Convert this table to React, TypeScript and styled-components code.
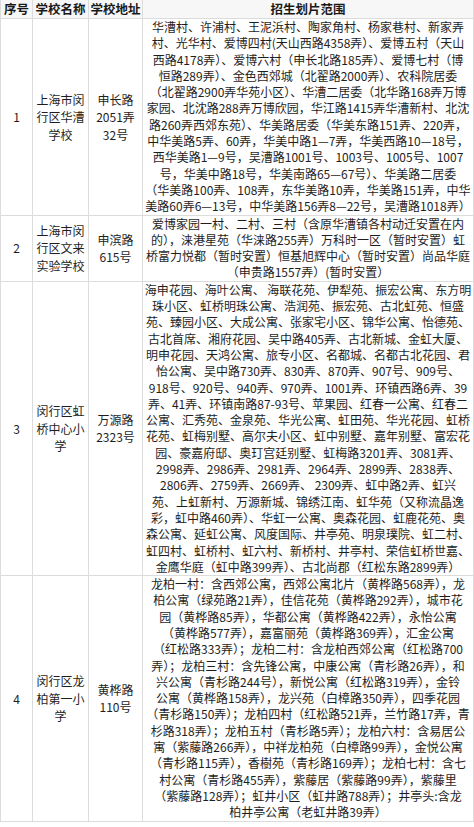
import React from 'react'
import styled, { createGlobalStyle } from 'styled-components'

const GlobalStyle = createGlobalStyle`
  html, body {
    margin: 0;
    padding: 0;
    background: #ffffff;
  }
  body {
    font-family: "Noto Sans CJK SC", "Noto Sans", sans-serif;
    color: #222;
  }
`

const Table = styled.table`
  width: 474px;
  border-collapse: collapse;
  table-layout: fixed;
`

const HeadCell = styled.th`
  height: 18px;
  padding: 0;
  font-size: 12.5px;
  font-weight: 700;
  line-height: 18px;
  color: #1a1a1a;
  background: #f7f7f7;
  border: 1px solid #dcdcdc;
  border-top: none;
  text-align: center;
  white-space: nowrap;
`

const Cell = styled.td<{ $side?: boolean }>`
  padding: 0;
  border: 1px solid #dcdcdc;
  text-align: center;
  vertical-align: middle;
  font-size: 12px;
  line-height: ${p => (p.$side ? '17.5px' : '16.3px')};
  color: #1e1e1e;
`

const Line = styled.div`
  white-space: nowrap;
`

type Row = {
  no: string
  name: string[]
  addr: string[]
  area: string[]
}

const rows: Row[] = [
  {
    no: '1',
    name: ['上海市闵', '行区华漕', '学校'],
    addr: ['申长路', '2051弄', '32号'],
    area: [
      '华漕村、许浦村、王泥浜村、陶家角村、杨家巷村、新家弄',
      '村、光华村、爱博四村(天山西路4358弄）、爱博五村（天山',
      '西路4178弄）、爱博六村（申长北路185弄）、爱博七村（博',
      '恒路289弄）、金色西郊城（北翟路2000弄）、农科院居委',
      '（北翟路2900弄华苑小区）、华漕二居委（北华路168弄万博',
      '家园、北沈路288弄万博欣园，华江路1415弄华漕新村、北沈',
      '路260弄西郊东苑）、华美路居委（华美东路151弄、220弄，',
      '中华美路5弄、60弄，华美中路1—7弄，华美西路10—18号，',
      '西华美路1—9号，吴漕路1001号、1003号、1005号、1007',
      '号，华美中路18号，华美南路65—67号）、华美路二居委',
      '（华美路100弄、108弄，东华美路10弄，华美路151弄，中华',
      '美路60弄6—13号，中华美路156弄8—22号，吴漕路1018弄）',
    ],
  },
  {
    no: '2',
    name: ['上海市闵', '行区文来', '实验学校'],
    addr: ['申滨路', '615号'],
    area: [
      '爱博家园一村、二村、三村（含原华漕镇各村动迁安置在内',
      '的），涞港星苑（华涞路255弄）万科时一区（暂时安置）虹',
      '桥富力悦都（暂时安置）恒基旭辉中心（暂时安置）尚品华庭',
      '（申贵路1557弄）(暂时安置）',
    ],
  },
  {
    no: '3',
    name: ['闵行区虹', '桥中心小', '学'],
    addr: ['万源路', '2323号'],
    area: [
      '海申花园、海叶公寓、 海联花苑、伊犁苑、振宏公寓、东方明',
      '珠小区、虹桥明珠公寓、浩润苑、振宏苑、古北虹苑、恒盛',
      '苑、臻园小区、大成公寓、张家宅小区、锦华公寓、怡德苑、',
      '古北首席、湘府花园、吴中路405弄、古北新城、金虹大厦、',
      '明申花园、天鸿公寓、旅专小区、名都城、名都古北花园、君',
      '怡公寓、吴中路730弄、830弄、870弄、907号、909号、',
      '918号、920号、940弄、970弄、1001弄、环镇西路6弄、39',
      '弄、41弄、环镇南路87-93号、苹果园、红春一公寓、红春二',
      '公寓、汇秀苑、金泉苑、华光公寓、虹田苑、华光花园、虹桥',
      '花苑、虹梅别墅、高尔夫小区、虹中别墅、嘉年别墅、富宏花',
      '园、豪嘉府邸、奥玎宫廷别墅、虹梅路3201弄、3081弄、',
      '2998弄、2986弄、2981弄、2964弄、2899弄、2838弄、',
      '2806弄、2759弄、2669弄、 2309弄、虹中路2弄、虹兴',
      '苑、上虹新村、万源新城、锦绣江南、虹华苑（又称流晶逸',
      '彩，虹中路460弄）、华虹一公寓、奥森花园、虹鹿花苑、奥',
      '森公寓、延虹公寓、风度国际、井亭苑、明泉璞院、虹二村、',
      '虹四村、虹桥村、虹六村、新桥村、井亭村、荣信虹桥世嘉、',
      '金鹰华庭（虹中路399弄）、古北尚郡（红松东路2899弄）',
    ],
  },
  {
    no: '4',
    name: ['闵行区龙', '柏第一小', '学'],
    addr: ['黄桦路', '110号'],
    area: [
      '龙柏一村：含西郊公寓，西郊公寓北片（黄桦路568弄），龙',
      '柏公寓（绿苑路21弄），佳信花苑（黄桦路292弄），城市花',
      '园（黄桦路85弄），华都公寓（黄桦路422弄），永怡公寓',
      '（黄桦路577弄），嘉富丽苑（黄桦路369弄），汇金公寓',
      '（红松路333弄）；龙柏二村：含龙柏西郊公寓（红松路700',
      '弄）；龙柏三村：含先锋公寓，中康公寓（青杉路26弄），和',
      '兴公寓（青杉路244号），新悦公寓（红松路319弄），金铃',
      '公寓（黄桦路158弄），龙兴苑（白樟路350弄），四季花园',
      '（青杉路150弄）；龙柏四村（红松路521弄，兰竹路17弄，青',
      '杉路318弄）；龙柏五村（青杉路5弄）；龙柏六村：含易居公',
      '寓（紫藤路266弄），中祥龙柏苑（白樟路99弄），金悦公寓',
      '（青杉路115弄），香樹苑（青杉路169弄）；龙柏七村：含七',
      '村公寓（青杉路455弄），紫藤居（紫藤路99弄），紫藤里',
      '（紫藤路128弄）；虹井小区（虹井路788弄）；井亭头:含龙',
      '柏井亭公寓（老虹井路39弄）',
    ],
  },
]

const Lines = ({ items }: { items: string[] }) => (
  <>
    {items.map((t, i) => (
      <Line key={i}>{t}</Line>
    ))}
  </>
)

export default function App() {
  return (
    <>
      <GlobalStyle />
      <Table>
        <colgroup>
          <col style={{ width: 32 }} />
          <col style={{ width: 56 }} />
          <col style={{ width: 54 }} />
          <col />
        </colgroup>
        <thead>
          <tr>
            <HeadCell>序号</HeadCell>
            <HeadCell>学校名称</HeadCell>
            <HeadCell>学校地址</HeadCell>
            <HeadCell>招生划片范围</HeadCell>
          </tr>
        </thead>
        <tbody>
          {rows.map(r => (
            <tr key={r.no}>
              <Cell $side>{r.no}</Cell>
              <Cell $side>
                <Lines items={r.name} />
              </Cell>
              <Cell $side>
                <Lines items={r.addr} />
              </Cell>
              <Cell>
                <Lines items={r.area} />
              </Cell>
            </tr>
          ))}
        </tbody>
      </Table>
    </>
  )
}
